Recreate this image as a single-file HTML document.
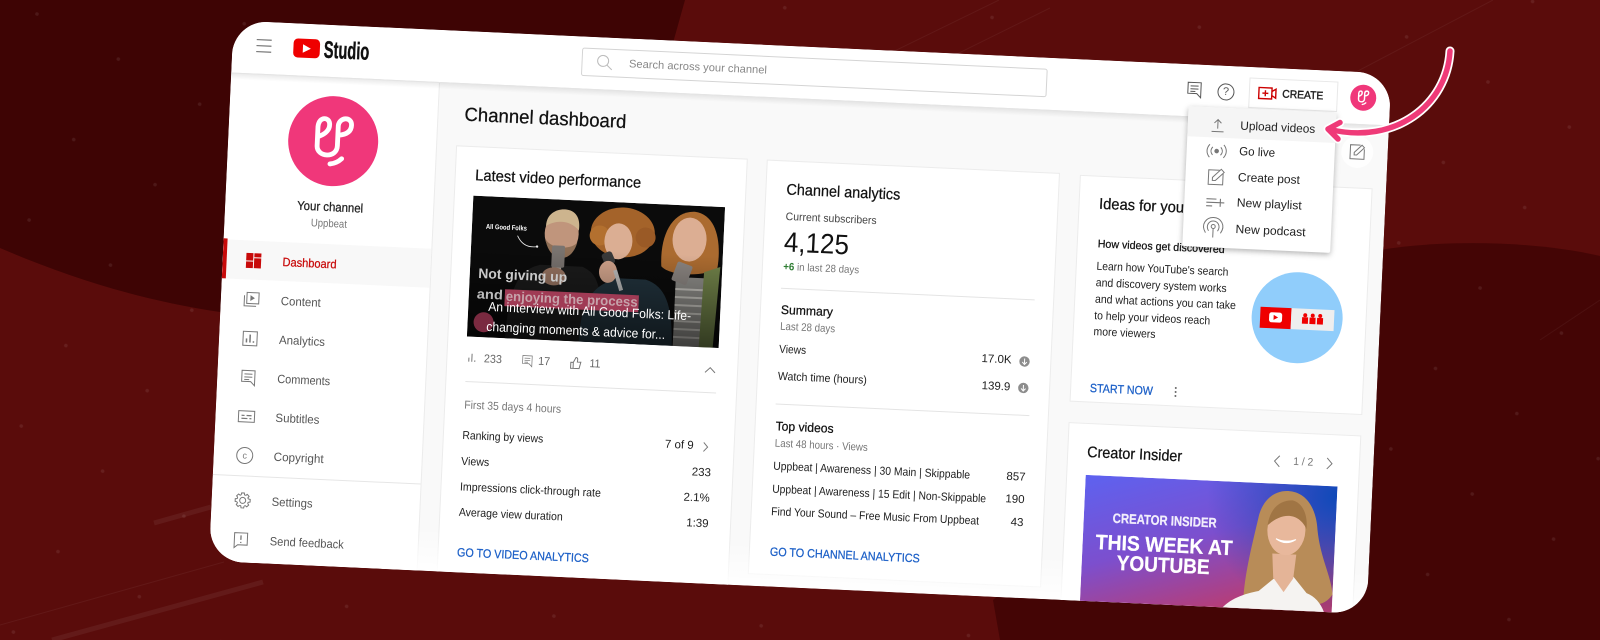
<!DOCTYPE html>
<html lang="en"><head><meta charset="utf-8"><title>YouTube Studio – Channel dashboard</title>
<style>
html,body{margin:0;padding:0;width:1600px;height:640px;overflow:hidden;background:#5a0c0b}
svg{display:block;filter:blur(.35px)}
text{font-family:"Liberation Sans",Arial,sans-serif;dominant-baseline:central;fill:#202020;font-size:11.5px}
.m{stroke:currentColor;stroke-width:.25px}
.t{color:#111;fill:#111;font-size:15.5px}
.s{fill:#555;font-size:12px;color:#555}
.g{fill:#777;font-size:11px}
.b{fill:#1b5fc7;color:#1b5fc7;font-size:12px}
.i{fill:none;stroke:#777;stroke-width:1}
.d{stroke:#e4e4e4;stroke-width:1}
.c{fill:#fff;stroke:#ececec;stroke-width:1}
</style></head><body>
<svg width="1600" height="640" viewBox="0 0 1600 640" xmlns="http://www.w3.org/2000/svg">
<defs>
<pattern id="dots" width="93" height="92" patternUnits="userSpaceOnUse" patternTransform="translate(37 14) rotate(29) translate(-46 -46)"><circle cx="46" cy="46" r="1.8" fill="#fff" fill-opacity=".08"/></pattern>
<clipPath id="win"><rect width="1159" height="541" rx="34"/></clipPath>
<clipPath id="th"><rect width="252" height="141"/></clipPath>
<clipPath id="ci"><rect width="252" height="141"/></clipPath>
<linearGradient id="fade" x1="0" y1="0" x2="0" y2="1"><stop offset="0" stop-color="#fff" stop-opacity="0"/><stop offset="1" stop-color="#fff" stop-opacity=".92"/></linearGradient>
<linearGradient id="hs" x1="0" y1="0" x2="0" y2="1"><stop offset="0" stop-color="#000" stop-opacity=".09"/><stop offset="1" stop-color="#000" stop-opacity="0"/></linearGradient>
<linearGradient id="thb" x1="0" y1="0" x2="0" y2="1"><stop offset=".35" stop-color="#000" stop-opacity="0"/><stop offset="1" stop-color="#000" stop-opacity=".55"/></linearGradient>
<linearGradient id="cg" x1="0" y1="0" x2=".55" y2="1"><stop offset="0" stop-color="#5d62f0"/><stop offset=".5" stop-color="#7c4fce"/><stop offset="1" stop-color="#c03a68"/></linearGradient>
<radialGradient id="cb" gradientUnits="userSpaceOnUse" cx="252" cy="10" r="130"><stop offset="0" stop-color="#0f49b8"/><stop offset="1" stop-color="#0f49b8" stop-opacity="0"/></radialGradient>
<g id="logo" fill="none" stroke="#fff" stroke-linecap="round" stroke-linejoin="round" stroke-width="5.5"><path d="M-16 -5C-9 -8 -4 -13 -5 -20C-6 -27 -17 -28 -18 -16L-18 6C-18 19 5 20 5 5L5 -18C6 -28 20 -29 20 -19C20 -11 13 -8 6 -7"/><path d="M-2.5 26Q5 25 10.5 19.5"/></g>
</defs>

<!-- background -->
<rect width="1600" height="640" fill="#5a0c0b"/>
<path d="M0 0H685L664 75L640 300L220 312C140 300 70 278 0 248Z" fill="#3e0404"/>
<path d="M1000 640L993 600L1380 250C1440 240 1530 240 1600 256V640Z" fill="#440505"/>
<rect width="1600" height="640" fill="url(#dots)"/>
<g stroke="#fff" stroke-opacity=".05" fill="none">
<path d="M823 86L999 0M880 92L1050 8M954 99L1037 57M1257 124L1493 0M0 625L224 562"/>
<path d="M1540 340L1600 300"/>
</g>
<g stroke="#fff" stroke-opacity=".06" stroke-width="5" fill="none"><path d="M154 523L211 507M52 640L263 582"/></g>

<!-- window -->
<g transform="translate(233.6 20.5) rotate(2.62)">
<g clip-path="url(#win)">
<rect width="1159" height="541" fill="#f9f9f9"/>
<!-- sidebar -->
<rect y="52" width="208" height="489" fill="#fff"/>
<rect x="208" y="52" width="1" height="489" fill="#ececec"/>
<rect y="219" width="208" height="39" fill="#f8f8f8"/>
<rect x="0" y="218" width="4" height="40" fill="#c80a0a"/>
<circle cx="105" cy="116" r="45" fill="#f0377a"/>
<use href="#logo" transform="translate(105 116) scale(.88)"/>
<text x="105" y="182" text-anchor="middle" class="m" textLength="66" lengthAdjust="spacingAndGlyphs" style="font-size:12.5px;color:#222">Your channel</text>
<text x="104.5" y="199" text-anchor="middle" textLength="36" lengthAdjust="spacingAndGlyphs" style="font-size:11px;fill:#777">Uppbeat</text>
<text x="60" y="239" class="m" style="fill:#c80a0a;color:#c80a0a;font-size:12px" textLength="54" lengthAdjust="spacingAndGlyphs">Dashboard</text>
<text x="60" y="278" class="s" textLength="40" lengthAdjust="spacingAndGlyphs">Content</text>
<text x="60" y="317" class="s" textLength="46" lengthAdjust="spacingAndGlyphs">Analytics</text>
<text x="60" y="356" class="s" textLength="53" lengthAdjust="spacingAndGlyphs">Comments</text>
<text x="60" y="395" class="s" textLength="44" lengthAdjust="spacingAndGlyphs">Subtitles</text>
<text x="60" y="434" class="s" textLength="50" lengthAdjust="spacingAndGlyphs">Copyright</text>
<rect x="0" y="454" width="208" height="1" fill="#e6e6e6"/>
<text x="60" y="479" class="s" textLength="41" lengthAdjust="spacingAndGlyphs">Settings</text>
<!-- sidebar icons -->
<g transform="translate(31 239)" fill="#c80a0a"><rect x="-7.5" y="-7.5" width="7" height="7.5"/><rect x=".5" y="-7.5" width="7" height="4"/><rect x="-7.5" y="1" width="7" height="6.5"/><rect x=".5" y="-2.5" width="7" height="10"/></g>
<g transform="translate(31 278)" class="i"><rect x="-5" y="-7" width="12" height="11"/><path d="M-7.5 -4V6.5H4.5"/><path d="M-1.5 -4.5L3 -1.5L-1.5 1.5Z" fill="#777" stroke="none"/></g>
<g transform="translate(31 317)" class="i"><rect x="-7" y="-7" width="14" height="14"/><path d="M-3.5 4V0M0 4V-4M3.5 4V2.5" stroke-width="1.5"/></g>
<g transform="translate(31 356)" class="i"><path d="M-6.5 -7H6.5V8L2.5 4H-6.5Z"/><path d="M-4 -3.5H4M-4 -.5H4M-4 2H1"/></g>
<g transform="translate(31 395)" class="i"><rect x="-8" y="-5.5" width="16" height="11"/><path d="M-5 -1H-2M0 -1H5M-5 2H1M3 2H5" stroke-width="1.2"/></g>
<g transform="translate(31 434)" class="i"><circle r="8"/></g>
<text x="31" y="434" text-anchor="middle" style="font-size:9px;fill:#777">c</text>
<g transform="translate(31 479)" class="i" stroke-width=".9"><circle r="3"/>
<path d="M5.56 -1.65L7.48 -1.32V1.32L5.56 1.65L5.09 2.77"/>
<path transform="rotate(45)" d="M5.56 -1.65L7.48 -1.32V1.32L5.56 1.65L5.09 2.77"/>
<path transform="rotate(90)" d="M5.56 -1.65L7.48 -1.32V1.32L5.56 1.65L5.09 2.77"/>
<path transform="rotate(135)" d="M5.56 -1.65L7.48 -1.32V1.32L5.56 1.65L5.09 2.77"/>
<path transform="rotate(180)" d="M5.56 -1.65L7.48 -1.32V1.32L5.56 1.65L5.09 2.77"/>
<path transform="rotate(225)" d="M5.56 -1.65L7.48 -1.32V1.32L5.56 1.65L5.09 2.77"/>
<path transform="rotate(270)" d="M5.56 -1.65L7.48 -1.32V1.32L5.56 1.65L5.09 2.77"/>
<path transform="rotate(315)" d="M5.56 -1.65L7.48 -1.32V1.32L5.56 1.65L5.09 2.77"/></g>

<!-- main title -->
<text x="235" y="84" class="m" style="font-size:19px;fill:#111;color:#111" textLength="162" lengthAdjust="spacingAndGlyphs">Channel dashboard</text>

<!-- card 1 -->
<rect class="c" x="228.5" y="115" width="291" height="440"/>
<text x="248.5" y="144" class="t m" textLength="166" lengthAdjust="spacingAndGlyphs">Latest video performance</text>
<g transform="translate(247.5 164)" clip-path="url(#th)">
<rect width="252" height="141" fill="#0b0b0b"/>
<!-- person 1 -->
<path d="M38 141C40 90 48 72 70 66L112 66C128 72 134 85 134 141Z" fill="#1b1b1b"/>
<ellipse cx="90" cy="34" rx="17" ry="21" fill="#c0957c"/>
<path d="M74 40C78 62 100 66 106 42C100 50 80 50 74 40Z" fill="#8f6f56"/>
<rect x="82" y="50" width="9" height="20" fill="#a8a29a"/>
<path d="M74 27C74 12 88 8 96 10C106 12 108 22 107 30C98 20 84 20 74 27Z" fill="#cdb48e"/>
<ellipse cx="84" cy="77" rx="12" ry="9" fill="#9a7663"/>
<rect x="81" y="46" width="13" height="22" rx="2" fill="#7a7470"/>
<!-- person 3 -->
<path d="M191 62C188 30 200 6 222 6C246 8 250 40 247 62C236 70 200 72 191 62Z" fill="#ab6b30"/>
<rect x="206" y="72" width="36" height="80" fill="#8b8a86"/>
<path d="M206 84H242M206 92H242M206 100H242M206 108H242M206 116H242M206 124H242M206 132H242" stroke="#c5c3bd" stroke-width="2"/>
<path d="M234 66L250 60L246 141H232Z" fill="#6f8048"/>
<ellipse cx="218" cy="34" rx="17" ry="22" fill="#dcae93"/>
<rect x="204" y="58" width="16" height="20" rx="2" fill="#89837f" transform="rotate(18 212 68)"/>
<!-- person 2 -->
<path d="M112 141C112 100 124 82 150 76L176 76C198 82 204 104 205 141Z" fill="#22333d"/>
<ellipse cx="151" cy="30" rx="32" ry="25" fill="#a4632a"/>
<circle cx="128" cy="34" r="10" fill="#b3702f"/><circle cx="174" cy="34" r="10" fill="#9a5a26"/>
<ellipse cx="147" cy="39" rx="14" ry="18" fill="#dbae93"/>
<rect x="132" y="50" width="11" height="13" rx="3" fill="#3a3a3a" transform="rotate(-25 138 56)"/>
<ellipse cx="138" cy="70" rx="9" ry="11" fill="#d2a48c"/>
<path d="M145 68L152 88" stroke="#bcbcbc" stroke-width="4"/>
<rect width="252" height="141" y="0" fill="url(#thb)"/>
<text x="14" y="31" style="font-size:7px;fill:#fff;font-weight:bold" textLength="41" lengthAdjust="spacingAndGlyphs">All Good Folks</text>
<path d="M46 38C50 46 56 50 66 48" fill="none" stroke="#eee" stroke-width=".8"/>
<circle cx="66" cy="48" r="1.2" fill="#eee"/>
<text x="8.5" y="77" style="font-size:14px;font-weight:bold;fill:#c9c9c9" textLength="89" lengthAdjust="spacingAndGlyphs">Not giving up</text>
<rect x="36" y="92" width="134" height="17" fill="#a03b55"/>
<text x="8" y="98" style="font-size:13.5px;font-weight:bold;fill:#bdbdbd" textLength="26" lengthAdjust="spacingAndGlyphs">and</text>
<text x="37" y="99" style="font-size:13.5px;font-weight:bold;fill:#c6a2aa" textLength="132" lengthAdjust="spacingAndGlyphs">enjoying the process</text>
<circle cx="16" cy="126" r="10" fill="#7a2a40"/>
<text x="20" y="110" style="font-size:13px;fill:#fff" textLength="203" lengthAdjust="spacingAndGlyphs">An interview with All Good Folks: Life-</text>
<text x="19" y="130" style="font-size:13px;fill:#fff" textLength="179" lengthAdjust="spacingAndGlyphs">changing moments &amp; advice for...</text>
</g>
<!-- stats -->
<path d="M250.5 330V326M253.5 330V322M256.5 330V328.5" class="i" stroke-width="1.3"/>
<text x="265.5" y="327" style="fill:#666" textLength="18" lengthAdjust="spacingAndGlyphs">233</text>
<g transform="translate(309 326.5) scale(.72)" class="i"><path d="M-6.5 -7H6.5V8L2.5 4H-6.5Z"/><path d="M-4 -3.5H4M-4 -.5H4M-4 2H1"/></g>
<text x="319.8" y="327" style="fill:#666" textLength="12" lengthAdjust="spacingAndGlyphs">17</text>
<g transform="translate(357.5 327)" class="i"><path d="M-5 -1V5H-2.5V-1ZM-2.5 -1L0 -6C2 -6 2 -4 1.5 -1.5H5L3.5 5H-2.5"/></g>
<text x="371.2" y="327" style="fill:#666" textLength="11" lengthAdjust="spacingAndGlyphs">11</text>
<path d="M487 330L492 325L497 330" class="i"/>
<path d="M248 350H499" class="d"/>
<text x="248" y="374" style="fill:#777" textLength="97" lengthAdjust="spacingAndGlyphs">First 35 days 4 hours</text>
<text x="247.5" y="404.5" textLength="81" lengthAdjust="spacingAndGlyphs">Ranking by views</text>
<text x="247.5" y="430.5" textLength="28" lengthAdjust="spacingAndGlyphs">Views</text>
<text x="247.5" y="456" textLength="141" lengthAdjust="spacingAndGlyphs">Impressions click-through rate</text>
<text x="247.5" y="481.5" textLength="104" lengthAdjust="spacingAndGlyphs">Average view duration</text>
<text x="479" y="404" text-anchor="end">7 of 9</text>
<path d="M489 400L493 404.5L489 409" class="i"/>
<text x="497.5" y="430.5" text-anchor="end">233</text>
<text x="497.5" y="456" text-anchor="end">2.1%</text>
<text x="497.5" y="481.5" text-anchor="end">1:39</text>

<!-- card 2 -->
<rect class="c" x="539.5" y="115" width="292.5" height="414"/>
<text x="560" y="144" class="t m" textLength="114" lengthAdjust="spacingAndGlyphs">Channel analytics</text>
<text x="560.5" y="171" style="font-size:11px;fill:#444" textLength="91" lengthAdjust="spacingAndGlyphs">Current subscribers</text>
<text x="560" y="196" style="font-size:28px;fill:#111" textLength="65" lengthAdjust="spacingAndGlyphs">4,125</text>
<text x="560.3" y="221" style="font-size:10.5px;fill:#777" textLength="76" lengthAdjust="spacingAndGlyphs"><tspan style="fill:#2e7d32;font-weight:bold">+6</tspan> in last 28 days</text>
<path d="M559 242.5H813" class="d"/>
<text x="560" y="264" class="m" style="font-size:12.5px;fill:#111;color:#111" textLength="52" lengthAdjust="spacingAndGlyphs">Summary</text>
<text x="560" y="281" style="font-size:11px;fill:#777" textLength="55" lengthAdjust="spacingAndGlyphs">Last 28 days</text>
<text x="560" y="304" textLength="27" lengthAdjust="spacingAndGlyphs">Views</text>
<text x="560" y="331" textLength="89" lengthAdjust="spacingAndGlyphs">Watch time (hours)</text>
<text x="792.7" y="304" text-anchor="end">17.0K</text>
<text x="792.7" y="331" text-anchor="end">139.9</text>
<g fill="#8d8d8d"><circle cx="805.7" cy="304.5" r="5.2"/><circle cx="805.7" cy="331" r="5.2"/></g>
<path d="M805.7 301.5V306.5M803.5 305L805.7 307.5L808 305M805.7 328V333M803.5 331.5L805.7 334L808 331.5" stroke="#fff" fill="none" stroke-width="1"/>
<path d="M559 358.3H813" class="d"/>
<text x="560" y="380.5" class="m" style="font-size:12.5px;fill:#111;color:#111" textLength="58" lengthAdjust="spacingAndGlyphs">Top videos</text>
<text x="560" y="398" style="font-size:11px;fill:#777" textLength="93" lengthAdjust="spacingAndGlyphs">Last 48 hours · Views</text>
<text x="559.5" y="421" textLength="197" lengthAdjust="spacingAndGlyphs">Uppbeat | Awareness | 30 Main | Skippable</text>
<text x="559.5" y="444" textLength="214" lengthAdjust="spacingAndGlyphs">Uppbeat | Awareness | 15 Edit | Non-Skippable</text>
<text x="559.5" y="466.5" textLength="208" lengthAdjust="spacingAndGlyphs">Find Your Sound – Free Music From Uppbeat</text>
<text x="812" y="420.5" text-anchor="end">857</text>
<text x="812" y="443" text-anchor="end">190</text>
<text x="812" y="466" text-anchor="end">43</text>

<!-- card 3 -->
<rect class="c" x="853" y="116" width="292" height="226"/>
<text x="873" y="144" class="t m" textLength="85" lengthAdjust="spacingAndGlyphs">Ideas for you</text>
<text x="873.5" y="184" class="m" style="font-size:11px;fill:#111;color:#111" textLength="127" lengthAdjust="spacingAndGlyphs">How videos get discovered</text>
<text x="873.3" y="206.5" textLength="132" lengthAdjust="spacingAndGlyphs">Learn how YouTube's search</text>
<text x="873.3" y="223" textLength="131" lengthAdjust="spacingAndGlyphs">and discovery system works</text>
<text x="873.3" y="239.5" textLength="141" lengthAdjust="spacingAndGlyphs">and what actions you can take</text>
<text x="873.3" y="256" textLength="116" lengthAdjust="spacingAndGlyphs">to help your videos reach</text>
<text x="873.3" y="272" textLength="62" lengthAdjust="spacingAndGlyphs">more viewers</text>
<circle cx="1076" cy="248.3" r="45.5" fill="#90cdfb"/>
<rect x="1039" y="239" width="31" height="21" fill="#ef0000"/>
<rect x="1070" y="239" width="43" height="21" fill="#eeeeee"/>
<rect x="1048" y="244" width="13" height="10" rx="2.5" fill="#fff"/>
<path d="M1052.5 246.5L1057 249L1052.5 251.5Z" fill="#ef0000"/>
<g fill="#ef0000"><circle cx="1084" cy="245.5" r="2"/><rect x="1081" y="247.5" width="6" height="6.5"/><circle cx="1091.5" cy="245.5" r="2"/><rect x="1088.5" y="247.5" width="6" height="6.5"/><circle cx="1099" cy="245.5" r="2"/><rect x="1096" y="247.5" width="6" height="6.5"/></g>
<text x="872.3" y="328" class="b m" textLength="63" lengthAdjust="spacingAndGlyphs">START NOW</text>
<g fill="#666"><circle cx="958" cy="324" r="1"/><circle cx="958" cy="328" r="1"/><circle cx="958" cy="332" r="1"/></g>

<!-- card 4 -->
<rect class="c" x="853" y="363.5" width="292" height="200"/>
<text x="872.5" y="392.5" class="t m" textLength="95" lengthAdjust="spacingAndGlyphs">Creator Insider</text>
<path d="M1065 387L1060 392.5L1065 398M1112.5 387L1117.5 392.5L1112.5 398" class="i"/>
<text x="1088.7" y="392.5" text-anchor="middle" style="fill:#777;font-size:11px" textLength="20" lengthAdjust="spacingAndGlyphs">1 / 2</text>

<!-- bottom fade -->
<rect y="498" width="1159" height="43" fill="url(#fade)"/>

<!-- text above fade -->
<text x="60" y="518.5" class="s" textLength="74" lengthAdjust="spacingAndGlyphs">Send feedback</text>
<g transform="translate(31 518.5)" class="i"><path d="M-6.5 -7H6.5V5H-3L-6.5 8Z"/><path d="M0 -4.5V0M0 2V3.2" stroke-width="1.3"/></g>
<text x="247.5" y="521" class="b m" textLength="132" lengthAdjust="spacingAndGlyphs">GO TO VIDEO ANALYTICS</text>
<text x="560" y="506" class="b m" textLength="150" lengthAdjust="spacingAndGlyphs">GO TO CHANNEL ANALYTICS</text>

<g transform="translate(872 415)" clip-path="url(#ci)">
<rect width="252" height="141" fill="url(#cg)"/>
<rect width="252" height="141" fill="url(#cb)"/>
<path d="M163 122C163 90 170 60 175 32C180 12 194 6 205 7C222 8 232 24 234 44C238 72 250 90 252 108C244 122 228 122 216 110L186 110C180 124 170 128 163 122Z" fill="#b88c58"/>
<path d="M136 141C138 122 160 112 178 108L196 92L212 92L226 108C238 112 246 124 248 141Z" fill="#f5f3f1"/>
<path d="M190 70H214L212 94L203 108L192 94Z" fill="#e4b497"/>
<ellipse cx="203" cy="46" rx="19" ry="25" fill="#e8b89c"/>
<path d="M184 42C186 22 198 16 208 16C218 18 224 30 223 44C216 30 200 26 184 42Z" fill="#a07544"/>
<path d="M193 55Q203 62 213 55Q203 59 193 55Z" fill="#fff" stroke="#fff"/>
<text x="29" y="42" class="m" style="font-size:13.5px;font-weight:bold;fill:#f2eefc;color:#f2eefc" textLength="104" lengthAdjust="spacingAndGlyphs">CREATOR INSIDER</text>
<text x="13" y="67" class="m" style="font-size:21px;font-weight:bold;fill:#fff;color:#fff" textLength="137" lengthAdjust="spacingAndGlyphs">THIS WEEK AT</text>
<text x="35" y="87" class="m" style="font-size:21px;font-weight:bold;fill:#fff;color:#fff" textLength="93" lengthAdjust="spacingAndGlyphs">YOUTUBE</text>
</g>

<!-- header -->
<rect width="1159" height="52" fill="#fff"/>
<rect y="52" width="1159" height="7" fill="url(#hs)"/>
<rect y="52" width="1159" height="1" fill="#e4e4e4"/>
<path d="M24 18H39M24 24H39M24 30H39" stroke="#777" stroke-width="1.2" fill="none"/>
<rect x="61" y="15" width="26.5" height="19" rx="4.5" fill="#ef0000"/>
<path d="M70.5 20.5L78.5 24.7L70.5 29Z" fill="#fff"/>
<text x="91.5" y="25.5" class="m" style="font-size:24px;font-weight:bold;fill:#111;color:#111;stroke-width:.4px" textLength="45.5" lengthAdjust="spacingAndGlyphs">Studio</text>
<rect x="350" y="11.5" width="465" height="27.5" rx="2" fill="#fff" stroke="#d4d4d4"/>
<g fill="none" stroke="#bbb" stroke-width="1"><circle cx="371" cy="23.5" r="5.5"/><path d="M375 27.5L380 32"/></g>
<text x="397" y="25.7" style="font-size:11px;fill:#888" textLength="138" lengthAdjust="spacingAndGlyphs">Search across your channel</text>
<g transform="translate(963 25)" class="i" style="stroke:#555"><path d="M-6.5 -7H6.5V8L2.5 4H-6.5Z"/><path d="M-4 -3.5H4M-4 -.5H4M-4 2H1"/></g>
<circle cx="994.6" cy="26" r="8" class="i" style="stroke:#555"/>
<text x="994.6" y="26" text-anchor="middle" style="font-size:11px;fill:#555">?</text>
<rect x="1018" y="11" width="88" height="29.5" fill="#fff" stroke="#e8e8e8"/>
<g transform="translate(1036 25.5)" fill="none" stroke="#cc0000" stroke-width="1.4"><rect x="-8.5" y="-5.5" width="13" height="11"/><path d="M4.5 -2L8.5 -4.5V4.5L4.5 2"/><path d="M-5 0H1M-2 -3V3"/></g>
<text x="1051" y="26" class="m" style="font-size:11px;fill:#222;color:#222;stroke-width:.4px" textLength="41" lengthAdjust="spacingAndGlyphs">CREATE</text>
<circle cx="1132" cy="25.5" r="13" fill="#f0377a"/>
<use href="#logo" transform="translate(1132 25.5) scale(.26)"/>

<!-- edit icon -->
<circle cx="1128.5" cy="80" r="16" fill="#fff" fill-opacity=".75"/>
<g transform="translate(1128.5 80)" class="i"><path d="M3 -7H-7V7H7V-3"/><path d="M-3 3L-3 .5L4.5 -7L7 -4.5L-.5 3Z"/></g>

<!-- dropdown -->
<rect x="958" y="42" width="148" height="140" rx="2" fill="#fff" style="filter:drop-shadow(0 2px 3px rgba(0,0,0,.3))"/>
<rect x="958" y="42" width="148" height="30" fill="#f5f5f5"/>
<text x="1010.5" y="59" style="fill:#222;font-size:12px" textLength="75" lengthAdjust="spacingAndGlyphs">Upload videos</text>
<text x="1010.5" y="84.5" style="fill:#222;font-size:12px" textLength="36" lengthAdjust="spacingAndGlyphs">Go live</text>
<text x="1010.5" y="110.5" style="fill:#222;font-size:12px" textLength="62" lengthAdjust="spacingAndGlyphs">Create post</text>
<text x="1010.5" y="136" style="fill:#222;font-size:12px" textLength="65" lengthAdjust="spacingAndGlyphs">New playlist</text>
<text x="1010.5" y="162.5" style="fill:#222;font-size:12px" textLength="70" lengthAdjust="spacingAndGlyphs">New podcast</text>
<g class="i"><path d="M982 66H994M988 63V54M984.5 57.5L988 54L991.5 57.5"/>
<circle cx="988" cy="85.5" r="1.8" fill="#777"/><path d="M984 81.5C981.8 84 981.8 87 984 89.5M992 81.5C994.2 84 994.2 87 992 89.5M981 79C977.5 83 977.5 88 981 92M995 79C998.5 83 998.5 88 995 92"/>
<path d="M992 104.5H981V119H995.5V108"/><path d="M985 115L985 112L993.5 103.5L996.5 106.5L988 115Z"/>
<path d="M980 133.5H990M980 137H990M980 140.5H986M990 137H998M994 133V141" stroke-width="1.1"/>
<circle cx="988" cy="161" r="2"/><path d="M988 163V172M983.5 165.5C980 160 984 155.5 988 155.5C992 155.5 996 160 992.5 165.5M980.5 167.5C975 159 981 152 988 152C995 152 1001 159 995.5 167.5"/></g>
</g>
</g>

<!-- arrow -->
<g fill="none" stroke-linecap="round" stroke-linejoin="round">
<path d="M1450 51C1447 105 1395 145 1330 129.5" stroke="#fff" stroke-width="9"/>
<path d="M1340 122.5L1328 129L1338 139" stroke="#fff" stroke-width="9"/>
<path d="M1450 51C1447 105 1395 145 1330 129.5" stroke="#ef3a78" stroke-width="5.5"/>
<path d="M1340 122.5L1328 129L1338 139" stroke="#ef3a78" stroke-width="5.5"/>
</g>
</svg>
</body></html>
